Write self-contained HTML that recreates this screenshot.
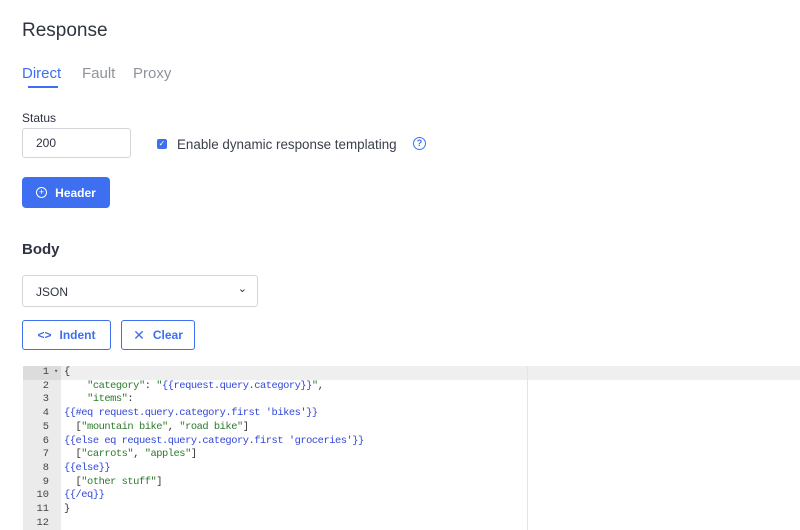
<!DOCTYPE html>
<html><head><meta charset="utf-8"><style>
*{box-sizing:border-box;margin:0;padding:0}
body{width:800px;height:530px;overflow:hidden;background:#fff;font-family:"Liberation Sans",sans-serif;color:#2d3340;position:relative}
.abs{position:absolute}
h1{position:absolute;left:22px;top:20px;font-size:19px;font-weight:normal;color:#2f3440}
.tab{position:absolute;top:65px;font-size:15px;color:#8e939c}
.inp{position:absolute;border:1px solid #d3d5d9;border-radius:3px;background:#fff}
.btn{position:absolute;border:1.5px solid #3d6ff0;border-radius:3px;color:#3d6ff0;font-size:12px;font-weight:bold;display:flex;align-items:center;justify-content:center;gap:8px}
.code{position:absolute;left:23px;top:366px;width:777px;height:164px;background:#fff;font-family:"Liberation Mono",monospace;font-size:10.4px;letter-spacing:-0.47px;line-height:13.7px}
.gut{position:absolute;left:0;top:0;width:38px;height:164px;background:#ebebeb;color:#444;text-align:right;letter-spacing:0}
.gut div{padding-right:12px}
.lines{position:absolute;left:41px;top:0;color:#333;white-space:pre}
.b{color:#3347d9}.s{color:#2c7a2c}
</style></head><body>
<h1>Response</h1>
<div class="tab" style="left:22px;color:#3d6ff0">Direct</div>
<div class="abs" style="left:28px;top:86px;width:30px;height:2px;background:#3d6ff0"></div>
<div class="tab" style="left:82px">Fault</div>
<div class="tab" style="left:133px">Proxy</div>
<div class="abs" style="left:22px;top:111px;font-size:12px">Status</div>
<div class="inp" style="left:22px;top:128px;width:109px;height:30px;font-size:12px;padding:7px 13px">200</div>
<div class="abs" style="left:157px;top:139px;width:10px;height:10px;background:#3d6ff0;border-radius:2px;color:#fff;font-size:8px;line-height:10px;text-align:center">✓</div>
<div class="abs" style="left:177px;top:137px;font-size:13.4px;color:#3a3f4a">Enable dynamic response templating</div>
<div class="abs" style="left:413px;top:137px;width:13px;height:13px;border:1.5px solid #3d6ff0;border-radius:50%;color:#3d6ff0;font-size:9px;font-weight:bold;text-align:center;line-height:10px">?</div>
<div class="btn" style="left:22px;top:177px;width:88px;height:31px;background:#3d6ff0;color:#fff;border:none;border-radius:4px"><span style="display:inline-block;width:11px;height:11px;border:1.3px solid #fff;border-radius:50%;font-size:9px;line-height:8px;text-align:center;font-weight:normal">+</span>Header</div>
<div class="abs" style="left:22px;top:241px;font-size:15px;font-weight:bold;color:#2f3440">Body</div>
<div class="inp" style="left:22px;top:275px;width:236px;height:32px;font-size:12px;padding:9px 13px">JSON<span style="position:absolute;right:10px;top:6px;font-size:11px">⌄</span></div>
<div class="btn" style="left:22px;top:320px;width:89px;height:30px">&lt;&gt;<span>Indent</span></div>
<div class="btn" style="left:121px;top:320px;width:74px;height:30px"><span style="font-weight:normal;font-size:14px">✕</span><span>Clear</span></div>
<div class="code">
<div class="abs" style="left:0;top:0;width:777px;height:14px;background:#efefef"></div>
<div class="gut"><div style="background:#dcdcdc">1</div><div>2</div><div>3</div><div>4</div><div>5</div><div>6</div><div>7</div><div>8</div><div>9</div><div>10</div><div>11</div><div>12</div></div>
<div class="abs" style="left:31px;top:0;font-size:7px;line-height:13px;color:#555">▾</div>
<div class="abs" style="left:504px;top:0;width:1px;height:164px;background:#e4e4e4"></div>
<div class="lines">{
    <span class="s">"category"</span>: <span class="s">"</span><span class="b">{{request.query.category}}</span><span class="s">"</span>,
    <span class="s">"items"</span>:
<span class="b">{{#eq request.query.category.first 'bikes'}}</span>
  [<span class="s">"mountain bike"</span>, <span class="s">"road bike"</span>]
<span class="b">{{else eq request.query.category.first 'groceries'}}</span>
  [<span class="s">"carrots"</span>, <span class="s">"apples"</span>]
<span class="b">{{else}}</span>
  [<span class="s">"other stuff"</span>]
<span class="b">{{/eq}}</span>
}
</div>
</div>
</body></html>
